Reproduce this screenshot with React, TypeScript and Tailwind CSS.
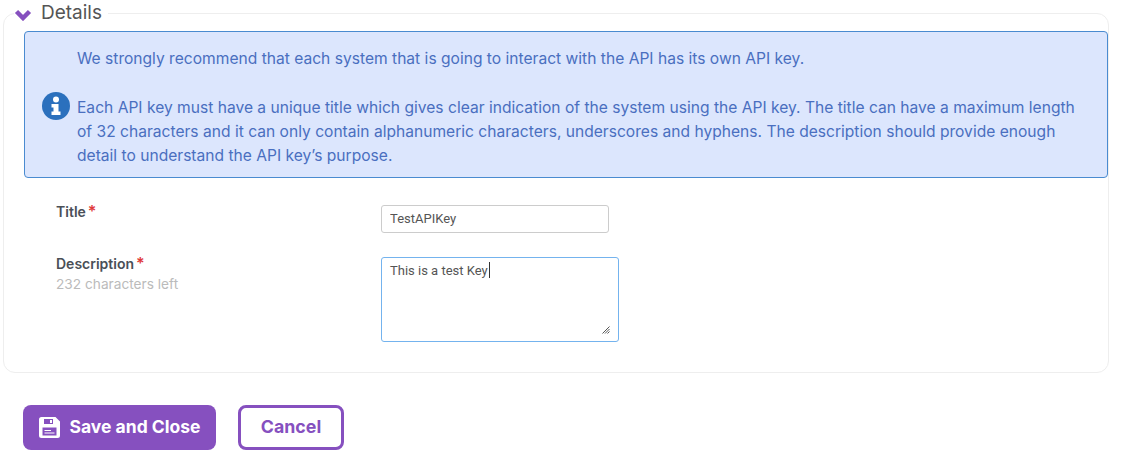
const SaveIcon = () => (
  <svg width="21" height="21" viewBox="0 0 21 21">
    <path
      fillRule="evenodd"
      d="M2.5 0 H16.5 L21 4.5 V18.5 A2.5 2.5 0 0 1 18.5 21 H2.5 A2.5 2.5 0 0 1 0 18.5 V2.5 A2.5 2.5 0 0 1 2.5 0 Z M5 2 V7 H14 V2 Z M11 3 V6 H13 V3 Z M3.5 10.5 V18.5 H17.5 V10.5 Z"
      fill="#ffffff"
    />
    <path d="M5.5 13 H12 V14 H5.5 Z M5.5 15.5 H15.5 V16.5 H5.5 Z" fill="#ffffff" />
  </svg>
);

const App = () => {
  return (
    <div className="w-[1128px] h-[473px] bg-white overflow-hidden font-['Inter',sans-serif] pt-[1px] pl-[3px]">
      <fieldset className="w-[1106px] h-[372px] border border-[#eeeeee] rounded-xl pl-5 m-0">
        <legend className="-ml-[10px] pr-[6px] flex items-center h-[24px]">
          <svg width="18" height="12" viewBox="0 0 18 12" className="mr-[9px] mt-[3px]">
            <path d="M2.5 2.5 L9 9 L15.5 2.5" fill="none" stroke="#8650bf" strokeWidth="4.5" />
          </svg>
          <span className="text-[19px] text-[#555555] leading-6">Details</span>
        </legend>

        <div className="w-[1084px] h-[147px] mt-[6px] bg-[#dce6fd] border border-[#4a8bd0] rounded flex items-center text-[15.6px] leading-[24.3px] text-[#4a6fc0]">
          <div className="w-[52px] pl-[17px] shrink-0 mt-[2px]">
            <svg width="28" height="28" viewBox="0 0 28 28">
              <circle cx="14" cy="14" r="14" fill="#2b70bd" />
              <circle cx="14" cy="7.5" r="3" fill="#ffffff" />
              <path d="M9.5 12 H16.5 V19.5 H18.5 V23 H9.5 V19.5 H11.5 V15.5 H9.5 Z" fill="#ffffff" />
            </svg>
          </div>
          <div className="whitespace-nowrap mt-[7px]">
            <p>We strongly recommend that each system that is going to interact with the API has its own API key.</p>
            <br />
            <p>
              Each API key must have a unique title which gives clear indication of the system using the API key. The title can have a maximum length
              <br />
              of 32 characters and it can only contain alphanumeric characters, underscores and hyphens. The description should provide enough
              <br />
              detail to understand the API key’s purpose.
            </p>
          </div>
        </div>

        <div className="flex mt-[27px] pl-[32px]">
          <div className="w-[325px] -mt-[4px] text-[14px] font-semibold text-[#4a4f57] leading-5">
            Title<span className="text-[#e03a3a] text-[16px] ml-[2px]">*</span>
          </div>
          <input
            readOnly
            value="TestAPIKey"
            className="w-[228px] h-[28px] border border-[#cccccc] rounded-[3px] px-2 pb-[2px] text-[13px] text-[#555555] font-['Roboto',sans-serif]"
          />
        </div>

        <div className="flex mt-[24px] pl-[32px]">
          <div className="w-[325px] -mt-[4px] leading-5">
            <div className="text-[14px] font-semibold text-[#4a4f57]">
              Description<span className="text-[#e03a3a] text-[16px] ml-[2px]">*</span>
            </div>
            <div className="text-[13.7px] text-[#bbbbbb]">232 characters left</div>
          </div>
          <div className="relative w-[238px] h-[85px]">
            <textarea
              readOnly
              value="This is a test Key"
              className="w-full h-full resize-none border border-[#74b3ee] rounded-[3px] px-2 py-[3px] text-[13px] text-[#555555] font-['Roboto',sans-serif] outline-none"
            />
            <span className="absolute left-[108px] top-[5px] w-px h-[16px] bg-[#333333]" />
            <svg width="8" height="8" viewBox="0 0 8 8" className="absolute right-[9px] bottom-[8px]">
              <path d="M0.5 7.5 L7.5 0.5 M3 7.5 L7.5 3 M5.5 7.5 L7.5 5.5" stroke="#555555" strokeWidth="1" />
            </svg>
          </div>
        </div>
      </fieldset>

      <div className="flex gap-[22px] mt-[32px] ml-5">
        <button className="w-[193px] h-[45px] bg-[#8650bf] rounded-lg flex items-center justify-center gap-[10px] text-white text-[17.5px] font-bold">
          <SaveIcon />
          <span className="pb-[1px]">Save and Close</span>
        </button>
        <button className="w-[106px] h-[45px] border-[3px] border-[#8650bf] rounded-lg pb-[1px] text-[#8650bf] text-[17.8px] font-bold">
          Cancel
        </button>
      </div>
    </div>
  );
};

export default App;
